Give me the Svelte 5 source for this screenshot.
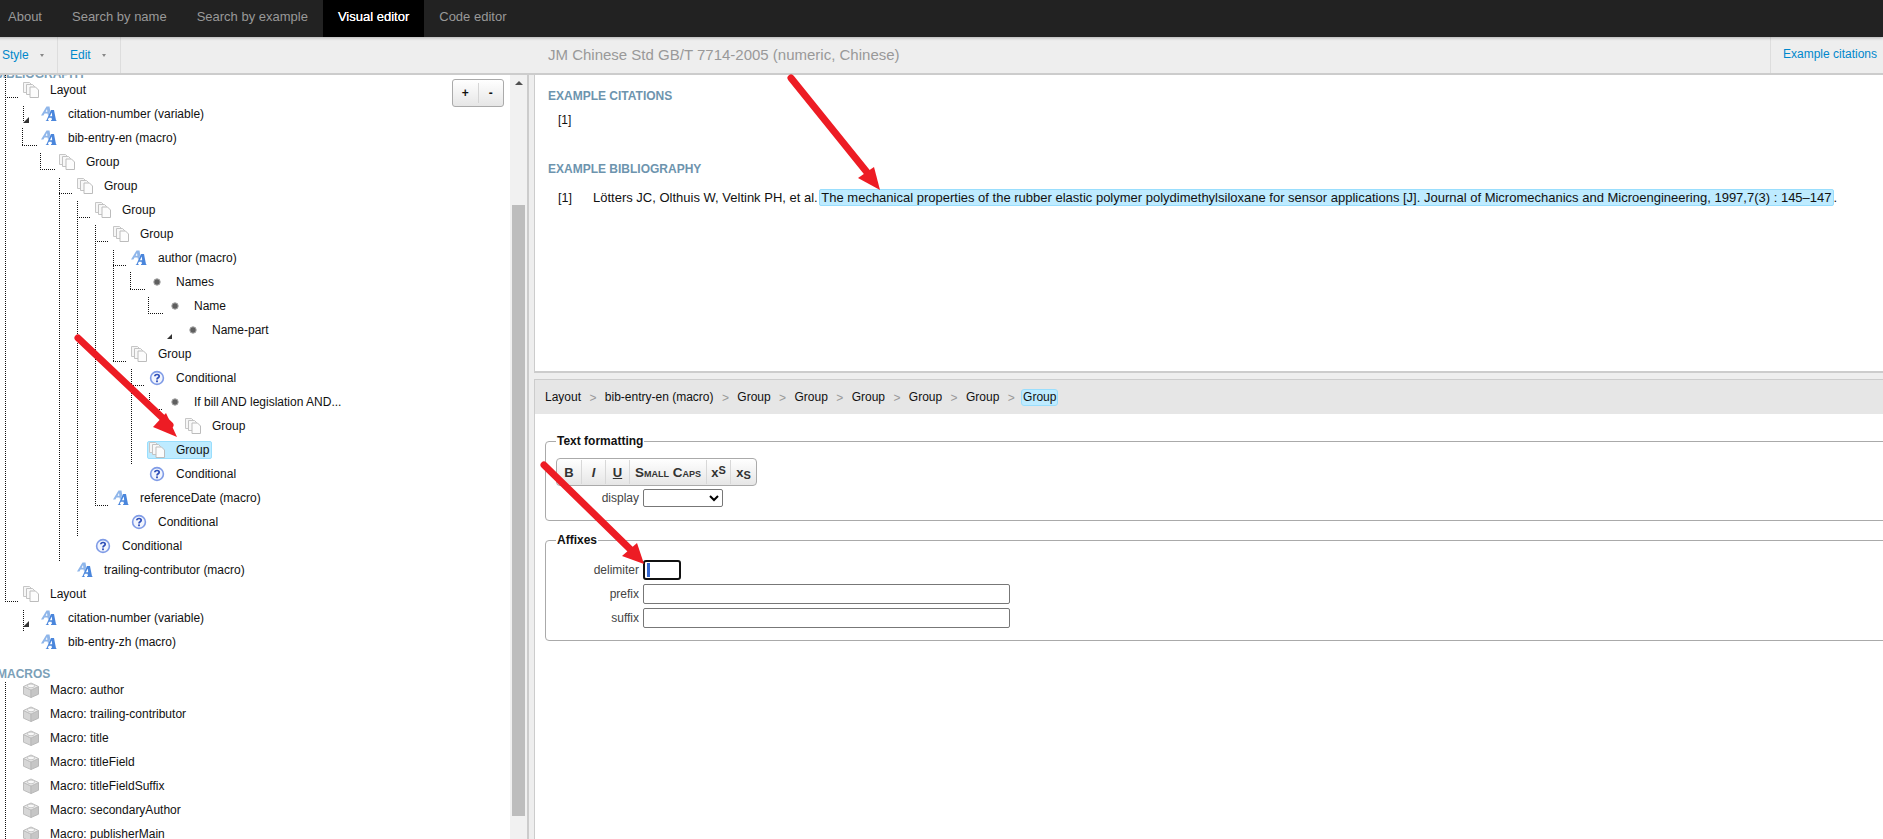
<script>
  const navItems = ['About', 'Search by name', 'Search by example', 'Visual editor', 'Code editor'];

  const treeTop = [
    ['group', 0, 'Layout'],
    ['style', 1, 'citation-number (variable)'],
    ['style', 1, 'bib-entry-en (macro)'],
    ['group', 2, 'Group'],
    ['group', 3, 'Group'],
    ['group', 4, 'Group'],
    ['group', 5, 'Group'],
    ['style', 6, 'author (macro)'],
    ['dot', 7, 'Names'],
    ['dot', 8, 'Name'],
    ['dot', 9, 'Name-part'],
    ['group', 6, 'Group'],
    ['cond', 7, 'Conditional'],
    ['dot', 8, 'If bill AND legislation AND...'],
    ['group', 9, 'Group'],
    ['group', 7, 'Group', true],
    ['cond', 7, 'Conditional'],
    ['style', 5, 'referenceDate (macro)'],
    ['cond', 6, 'Conditional'],
    ['cond', 4, 'Conditional'],
    ['style', 3, 'trailing-contributor (macro)'],
    ['group', 0, 'Layout'],
    ['style', 1, 'citation-number (variable)'],
    ['style', 1, 'bib-entry-zh (macro)']
  ];

  const macros = ['author', 'trailing-contributor', 'title', 'titleField', 'titleFieldSuffix', 'secondaryAuthor', 'publisherMain'];

  const verticals = [
    [5, 75, 601], [5, 682, 839], [23, 106, 122], [22, 128, 145], [40, 153, 169],
    [59, 178, 562], [77, 201, 537], [95, 225, 505], [113, 250, 361], [130, 272, 289],
    [148, 297, 313], [131, 369, 464], [149, 393, 409], [23, 610, 632]
  ];
  const horizontals = [
    [5, 19, 97], [22, 37, 145], [40, 55, 169], [59, 73, 193], [77, 91, 217], [95, 109, 241],
    [113, 127, 265], [130, 145, 289], [148, 163, 313], [113, 127, 361], [131, 145, 385],
    [149, 163, 409], [95, 109, 505], [5, 19, 601]
  ];
  const markers = ['23,123 29,117 29,123', '167,339 172,334 172,339', '23,627 29,621 29,627'];

  const crumbs = ['Layout', 'bib-entry-en (macro)', 'Group', 'Group', 'Group', 'Group', 'Group', 'Group'];
  const arrows = [
    { line: [78, 338, 170, 425], head: '177,437 153,427 166,413' },
    { line: [791, 78, 870, 176], head: '880,190 858,178 874,167' },
    { line: [544, 465, 632, 551], head: '644,564 622,556 637,543' }
  ];
</script>

{#snippet icon(kind)}
  <svg class="icon" viewBox="0 0 16 16" width="16" height="16" aria-hidden="true">
    {#if kind === 'group'}
      <path d="M.5.5h6l2 2v8h-8z" fill="#f6f6f6" stroke="#c6c6c6"/>
      <path d="M3.5 2.5h6l2 2v8h-8z" fill="#f8f8f8" stroke="#c2c2c2"/>
      <path d="M7 5h5.5l3 3v7.5H7z" fill="#fcfcfc" stroke="#bcbcbc"/>
    {:else if kind === 'style'}
      <path fill-rule="evenodd" d="M0 9.5 5.5.5h3L10 9.5H7l-.4-2H3.6l-1.2 2zM4.6 5.8h1.8L6 3z" fill="#8fb6ea"/>
      <path fill-rule="evenodd" d="M4.5 15l1-.8L10 4h3l2 10.2 1 .8h-6v-.8l.9-.2-.3-2.2H7.8l-1 2.2.9.2v.8zM8.6 10.2h2.6l-.4-3.7z" fill="#4a86dc" stroke="#fff" stroke-width=".4" paint-order="stroke"/>
    {:else if kind === 'cond'}
      <circle cx="8" cy="8" r="6.4" fill="#f2f5fd" stroke="#7f9be6" stroke-width="1.6"/>
      <path d="M5.8 6.2C6 3.9 10.2 3.9 10.2 6.2 10.2 7.8 8 7.6 8 9.4" fill="none" stroke="#2f4fb8" stroke-width="1.7"/>
      <rect x="7.1" y="10.4" width="1.8" height="1.8" fill="#2f4fb8"/>
    {:else if kind === 'dot'}
      <circle cx="8" cy="8" r="3.2" fill="#5f5f5f" stroke="#a5a5a5"/>
    {:else}
      <path d="M.5 4.5 8 8v7.5L.5 12.2z" fill="#d6d6d6" stroke="#bdbdbd"/>
      <path d="M15.5 4.5 8 8v7.5l7.5-3.3z" fill="#c6c6c6" stroke="#b8b8b8"/>
      <path d="M8 1 15.5 4.5 8 8 .5 4.5z" fill="#ececec" stroke="#bdbdbd"/>
      <ellipse cx="8" cy="3.9" rx="3.6" ry="1.9" fill="#f8f8f8" stroke="#c6c6c6"/>
    {/if}
  </svg>
{/snippet}

<div class="app">
  <nav class="nav">
    {#each navItems as item}
      <span class="nav-item" class:active={item === 'Visual editor'}>{item}</span>
    {/each}
  </nav>

  <div class="toolbar">
    <span class="menu style-menu">Style<i class="caret"></i></span>
    <span class="menu edit-menu">Edit<i class="caret"></i></span>
    <span class="title">JM Chinese Std GB/T 7714-2005 (numeric, Chinese)</span>
    <span class="examples">Example citations</span>
  </div>

  <div class="main">
    <aside class="tree-pane">
      <svg class="connectors" viewBox="0 75 510 764" width="510" height="764" aria-hidden="true">
        {#each verticals as [x, y1, y2]}
          <line x1={x + 0.5} x2={x + 0.5} {y1} {y2} />
        {/each}
        {#each horizontals as [x1, x2, y]}
          <line {x1} {x2} y1={y + 0.5} y2={y + 0.5} />
        {/each}
        {#each markers as points}
          <polygon {points} />
        {/each}
      </svg>

      <div class="section-title clipped">BIBLIOGRAPHY</div>
      {#each treeTop as [kind, depth, label, selected]}
        <div class="row" style="padding-left: {21 + depth * 18}px">
          <span class="node" class:selected>{@render icon(kind)}<span>{label}</span></span>
        </div>
      {/each}

      <div class="section-title macros">MACROS</div>
      {#each macros as macro}
        <div class="row" style="padding-left: 21px">
          <span class="node">{@render icon('macro')}<span>Macro: {macro}</span></span>
        </div>
      {/each}

      <div class="zoom-buttons"><span>+</span><span>-</span></div>
    </aside>

    <div class="scrollbar">
      <i class="scroll-up"></i>
      <div class="thumb"></div>
    </div>

    <div class="content">
      <section class="preview">
        <h3>EXAMPLE CITATIONS</h3>
        <div class="citation">[1]</div>
        <h3 class="bib-heading">EXAMPLE BIBLIOGRAPHY</h3>
        <div class="entry">
          <span class="entry-num">[1]</span>
          <span>Lötters JC, Olthuis W, Veltink PH, et al. <span class="hl">The mechanical properties of the rubber elastic polymer polydimethylsiloxane for sensor applications [J]. Journal of Micromechanics and Microengineering, 1997,7(3) : 145–147</span>.</span>
        </div>
      </section>

      <section class="editor">
        <div class="breadcrumb">
          {#each crumbs as crumb, i}
            {#if i > 0}<span class="sep">&gt;</span>{/if}
            <span class="crumb" class:current={i === crumbs.length - 1}>{crumb}</span>
          {/each}
        </div>

        <fieldset class="first">
          <legend>Text formatting</legend>
          <div class="btn-group">
            <span class="b">B</span>
            <span class="i">I</span>
            <span class="u">U</span>
            <span class="sc">Small Caps</span>
            <span class="sup">x<sup>s</sup></span>
            <span class="sub">x<sub>s</sub></span>
          </div>
          <div class="form-row display-row">
            <label for="display">display</label>
            <select id="display"><option></option></select>
          </div>
        </fieldset>

        <fieldset class="second">
          <legend>Affixes</legend>
          <div class="form-row">
            <label for="delimiter">delimiter</label>
            <span class="focus-wrap"><input id="delimiter" class="short" /><i class="text-caret"></i></span>
          </div>
          <div class="form-row">
            <label for="prefix">prefix</label>
            <input id="prefix" class="long" />
          </div>
          <div class="form-row">
            <label for="suffix">suffix</label>
            <input id="suffix" class="long" />
          </div>
        </fieldset>
      </section>
    </div>
  </div>

  <svg class="arrows" width="1883" height="839" aria-hidden="true">
    {#each arrows as a}
      <line x1={a.line[0]} y1={a.line[1]} x2={a.line[2]} y2={a.line[3]} />
      <polygon points={a.head} />
    {/each}
  </svg>
</div>

<style>
  :global(body) {
    margin: 0;
    font-family: "Liberation Sans", Arial, sans-serif;
    font-size: 12px;
    color: #111;
    overflow: hidden;
  }
  .app {
    position: relative;
    width: 1883px;
    height: 839px;
    overflow: hidden;
    display: flex;
    flex-direction: column;
    background: #eee;
  }

  .nav {
    flex: none;
    height: 37px;
    background: #222;
    display: flex;
    margin-left: -7px;
    box-shadow: 0 1px 3px rgba(0, 0, 0, .25);
    position: relative;
    z-index: 1;
  }
  .nav-item {
    padding: 0 15px;
    line-height: 34px;
    font-size: 13px;
    color: #999;
  }
  .nav-item.active {
    background: #000;
    color: #fff;
    text-shadow: 0 0 .4px #fff;
  }

  .toolbar {
    flex: none;
    height: 36px;
    border-bottom: 2px solid #ccc;
    display: flex;
    align-items: stretch;
    background: #eee;
    color: #08c;
    line-height: 35px;
  }
  .menu {
    display: flex;
    align-items: center;
    border-right: 1px solid #ddd;
    box-sizing: border-box;
  }
  .style-menu { width: 58px; padding-left: 2px; }
  .edit-menu { width: 63px; padding-left: 12px; }
  .caret {
    width: 0;
    height: 0;
    margin-left: 11px;
    border: 2.5px solid transparent;
    border-top: 3px solid #888;
    border-bottom: 0;
  }
  .title {
    flex: 1;
    padding-left: 427px;
    font-size: 15px;
    color: #999;
  }
  .examples {
    width: 113px;
    box-sizing: border-box;
    padding-left: 12px;
    border-left: 1px solid #ddd;
  }

  .main {
    flex: 1;
    min-height: 0;
    display: flex;
  }

  .tree-pane {
    position: relative;
    flex: none;
    width: 510px;
    background: #fff;
    overflow: hidden;
  }
  .connectors {
    position: absolute;
    left: 0;
    top: 0;
  }
  .connectors line {
    stroke: #111;
    stroke-width: 1;
    stroke-dasharray: 1 1;
    shape-rendering: crispEdges;
  }
  .connectors polygon { fill: #333; }

  .section-title {
    font-weight: bold;
    color: #7ba0b8;
    line-height: 14px;
    margin-left: -3px;
  }
  .clipped {
    margin-left: -6px;
    margin-top: -8px;
    margin-bottom: -3px;
    height: 14px;
  }
  .macros {
    height: 24px;
    box-sizing: border-box;
    padding-top: 13px;
  }

  .row {
    position: relative;
    height: 24px;
    display: flex;
    align-items: center;
    white-space: nowrap;
  }
  .node {
    display: inline-flex;
    align-items: center;
    height: 18px;
    padding: 0 2px 0 1px;
    border: 1px solid transparent;
    border-radius: 2px;
    box-sizing: border-box;
    gap: 11px;
  }
  .node.selected {
    background: #beebff;
    border-color: #99defd;
  }
  .icon { flex: none; }

  .zoom-buttons {
    position: absolute;
    right: 6px;
    top: 4px;
    width: 52px;
    height: 28px;
    box-sizing: border-box;
    border: 1px solid #aaa;
    border-radius: 3px;
    background: linear-gradient(#fff, #e6e6e6);
    display: flex;
    align-items: center;
    font-weight: bold;
  }
  .zoom-buttons span {
    flex: 1;
    text-align: center;
    line-height: 20px;
  }
  .zoom-buttons span + span { border-left: 1px solid #d5d5d5; }

  .scrollbar {
    position: relative;
    flex: none;
    width: 17px;
    background: #f1f1f1;
    border-right: 2px solid #ccc;
  }
  .scroll-up {
    position: absolute;
    left: 5px;
    top: 6px;
    width: 0;
    height: 0;
    border: 4px solid transparent;
    border-top: 0;
    border-bottom: 4px solid #505050;
  }
  .thumb {
    position: absolute;
    left: 2px;
    right: 2px;
    top: 130px;
    bottom: 23px;
    background: #bdbdbd;
  }

  .content {
    flex: 1;
    min-width: 0;
    margin-left: 5px;
    display: flex;
    flex-direction: column;
    overflow: hidden;
  }
  .preview {
    flex: none;
    height: 298px;
    box-sizing: border-box;
    padding: 14px 0 0 13px;
    background: #fff;
    border-left: 1px solid #ccc;
    border-bottom: 2px solid #ccc;
  }
  h3 {
    margin: 0;
    font-size: 12px;
    line-height: 14px;
    font-weight: bold;
    color: #6d94ae;
  }
  .citation {
    margin: 10px 0 0 10px;
    line-height: 14px;
  }
  .bib-heading { margin-top: 35px; }
  .entry {
    display: flex;
    margin: 13px 0 0 10px;
    font-size: 13px;
    line-height: 18px;
    white-space: nowrap;
  }
  .entry-num { width: 35px; flex: none; font-size: 12.5px; }
  .hl {
    display: inline-block;
    background: #beebff;
    border: 1px solid #99defd;
    border-radius: 2px;
    padding: 0 1px;
    line-height: 15px;
    margin-left: -2px;
  }

  .editor {
    flex: 1;
    min-height: 0;
    margin-top: 6px;
    background: #fff;
    border-left: 1px solid #ccc;
    border-top: 1px solid #ccc;
  }
  .breadcrumb {
    height: 34px;
    box-sizing: border-box;
    padding: 1px 0 0 9px;
    background: #e6e6e6;
    display: flex;
    align-items: center;
  }
  .sep {
    margin: 0 7.4px;
    color: #999;
  }
  .crumb {
    padding: 0 1px;
    line-height: 15px;
    border-radius: 2px;
  }
  .crumb.current {
    background: #beebff;
    outline: 1px solid #99defd;
  }

  fieldset {
    width: 1400px;
    margin: 0 0 0 10px;
    padding: 13px 10px 12px;
    border: 1px solid #aaa;
    border-radius: 4px;
    box-sizing: border-box;
  }
  fieldset.first {
    margin-top: 20px;
    padding-top: 10px;
    padding-bottom: 13px;
  }
  fieldset.second { margin-top: 12px; }
  legend {
    padding: 0 1px;
    font-weight: bold;
    line-height: 14px;
  }

  .btn-group {
    display: inline-flex;
    height: 28px;
    box-sizing: border-box;
    border: 1px solid #aaa;
    border-radius: 4px;
    background: linear-gradient(#fff, #e6e6e6);
    color: #333;
    vertical-align: top;
    margin-bottom: 3px;
  }
  .btn-group span {
    display: flex;
    align-items: center;
    justify-content: center;
    font-weight: bold;
    font-size: 13px;
    border-right: 1px solid #d8d8d8;
    box-sizing: border-box;
    height: 24px;
    margin-top: 1px;
  }
  .btn-group span:last-child { border-right: 0; }
  .b { width: 25px; }
  .i { width: 24px; font-style: italic; }
  .u { width: 24px; text-decoration: underline; }
  .sc { width: 77px; font-variant: small-caps; font-size: 13.5px !important; }
  .sup { width: 24px; }
  .sub { width: 25px; }
  .sup sup, .sub sub {
    display: block;
    font-variant: small-caps;
    font-size: 15px;
    line-height: 14px;
  }
  .sub sub { position: relative; top: 2px; }
  .sup sup { position: relative; top: -3px; }

  .form-row {
    display: grid;
    grid-template-columns: 83px auto;
    column-gap: 4px;
    align-items: center;
    justify-content: start;
    margin-bottom: 4px;
  }
  .form-row:last-child { margin-bottom: 0; }
  label {
    text-align: right;
    color: #444;
  }
  input {
    box-sizing: border-box;
    height: 20px;
    margin: 0;
    padding: 0 2px;
    border: 1px solid #777;
    border-radius: 2px;
    background: #fff;
    outline: none;
    display: block;
  }
  .long { width: 367px; }
  .short {
    width: 38px;
    border: 2px solid #111;
    border-radius: 3px;
  }
  select {
    width: 80px;
    height: 18px;
    margin: 0;
    padding: 0;
    box-sizing: border-box;
    border: 1px solid #777;
    border-radius: 2px;
    background: #fff;
    font-size: 12px;
    font-family: inherit;
  }
  .focus-wrap {
    position: relative;
    display: block;
    width: 38px;
  }
  .text-caret {
    position: absolute;
    left: 4px;
    top: 3px;
    width: 3px;
    height: 14px;
    background: #3367d1;
  }

  .arrows {
    position: absolute;
    left: 0;
    top: 0;
    pointer-events: none;
  }
  .arrows line {
    stroke: #ed1c24;
    stroke-width: 7;
    stroke-linecap: round;
  }
  .arrows polygon { fill: #ed1c24; }
</style>
